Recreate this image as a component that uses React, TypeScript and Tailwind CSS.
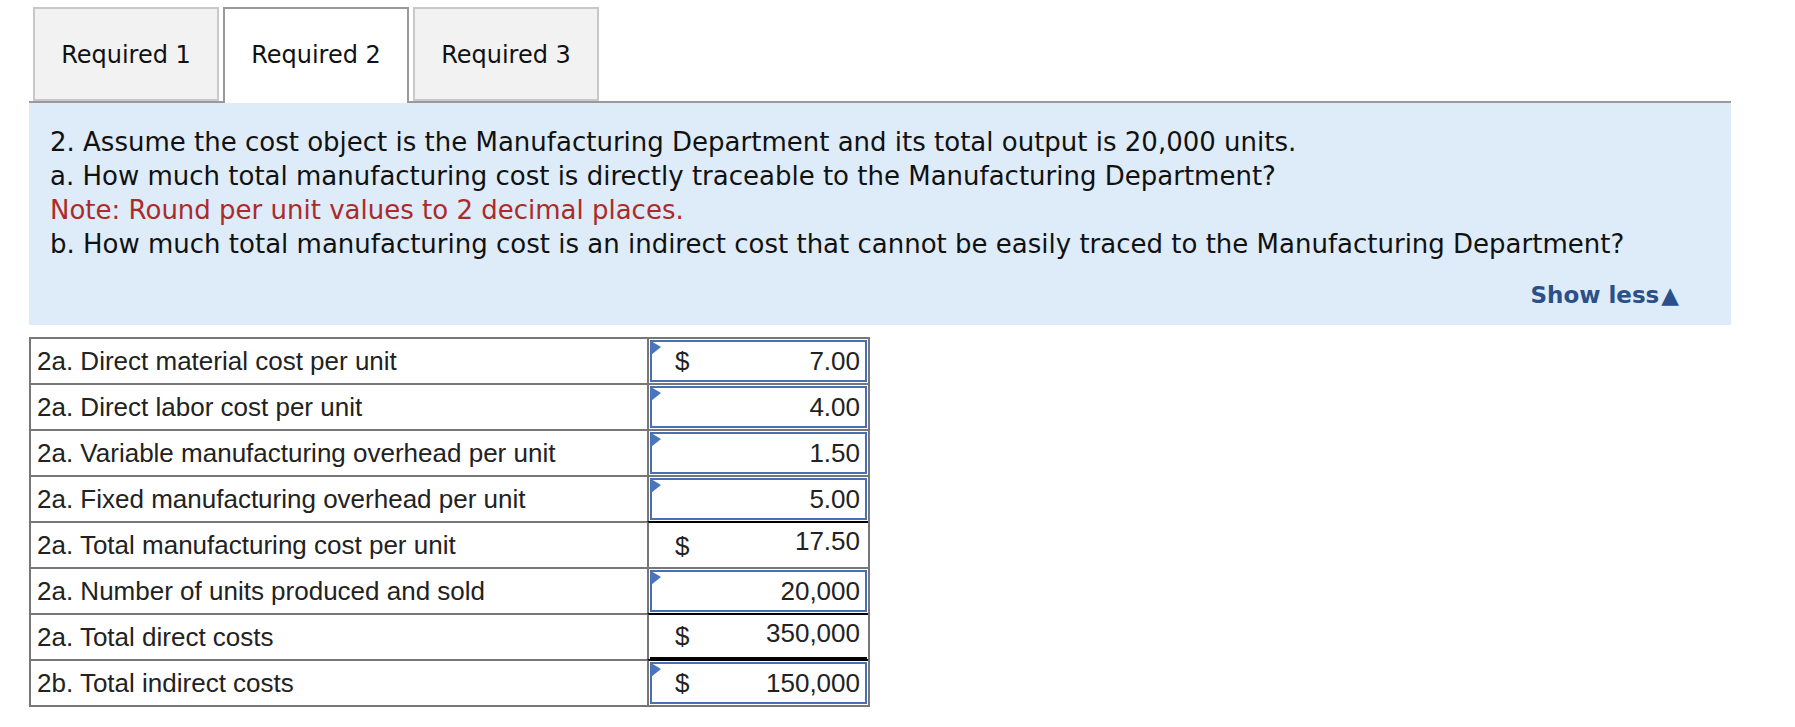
import React from "react";

type Row = {
  label: string;
  value: string;
  dollar?: boolean;
  input?: boolean;
  topBlack?: boolean;
  doubleLine?: boolean;
};

const rows: Row[] = [
  { label: "2a. Direct material cost per unit", value: "7.00", dollar: true, input: true },
  { label: "2a. Direct labor cost per unit", value: "4.00", input: true },
  { label: "2a. Variable manufacturing overhead per unit", value: "1.50", input: true },
  { label: "2a. Fixed manufacturing overhead per unit", value: "5.00", input: true },
  { label: "2a. Total manufacturing cost per unit", value: "17.50", dollar: true, topBlack: true },
  { label: "2a. Number of units produced and sold", value: "20,000", input: true },
  { label: "2a. Total direct costs", value: "350,000", dollar: true, topBlack: true, doubleLine: true },
  { label: "2b. Total indirect costs", value: "150,000", dollar: true, input: true, topBlack: true },
];

const tabs = ["Required 1", "Required 2", "Required 3"];

const ValueCell = ({ row }: { row: Row }) => {
  if (row.input) {
    return (
      <div className="h-full p-[1px]">
        <div className="relative h-full border-2 border-[#4a6fb3] flex items-center justify-between pl-[23px] pr-[5px]">
          <svg className="absolute left-[-1px] top-[-1px]" width="10" height="14" viewBox="0 0 10 14">
            <polygon points="0,0 10,6 0,14" fill="#4a74c0" />
          </svg>
          <span>{row.dollar ? "$" : ""}</span>
          <span>{row.value}</span>
        </div>
      </div>
    );
  }
  return (
    <div className="h-full pt-[1px] px-[1px]">
      <div className={`h-full flex justify-between pl-[25px] pr-[7px] ${row.doubleLine ? "border-b-2 border-black h-[40px]" : ""}`}>
        <span className="self-end pb-[1px]">{row.dollar ? "$" : ""}</span>
        <span className="self-start relative -top-[2px]">{row.value}</span>
      </div>
    </div>
  );
};

export default function App() {
  return (
    <div className="bg-white w-[1795px] h-[727px] pl-[29px] pt-[7px]" style={{ fontFamily: '"DejaVu Sans", Verdana, sans-serif' }}>
      <div className="w-[1702px]">
        {/* tabs */}
        <div className="flex items-start gap-[4px] pl-[4px] border-b-2 border-[#9a9a9a] h-[96px]">
          {tabs.map((t, i) => (
            <div
              key={t}
              className={`w-[186px] text-center pt-[32px] text-[24px] leading-[28px] text-[#111] ${
                i === 1
                  ? "h-[96px] bg-white border-2 border-b-0 border-[#9a9a9a] relative z-10"
                  : "h-[94px] bg-[#f2f2f2] border-2 border-[#c8c8c8]"
              }`}
            >
              {t}
            </div>
          ))}
        </div>

        {/* question panel */}
        <div className="bg-[#deebf8] pt-[22px] pb-[13px] pl-[21px] pr-[52px] text-[26px] leading-[34px] text-[#111]">
          <p>2. Assume the cost object is the Manufacturing Department and its total output is 20,000 units.</p>
          <p>a. How much total manufacturing cost is directly traceable to the Manufacturing Department?</p>
          <p className="text-[#ad2a2a]">Note: Round per unit values to 2 decimal places.</p>
          <p>b. How much total manufacturing cost is an indirect cost that cannot be easily traced to the Manufacturing Department?</p>
          <div className="flex justify-end mt-[17px]">
            <span className="font-bold text-[#2b4f88] text-[23px]">Show less<span className="ml-[2px]">▲</span></span>
          </div>
        </div>
      </div>

      {/* answer table */}
      <div
        className="mt-[12px] w-[841px] border-2 border-[#777] text-[26px] text-[#222]"
        style={{ fontFamily: '"Liberation Sans", Arial, sans-serif' }}
      >
        {rows.map((r, i) => (
          <div key={r.label} className="flex h-[46px] first:h-[44px]">
            <div className={`flex-1 flex items-center pl-[6px] ${i > 0 ? "border-t-2 border-[#777]" : ""}`}>{r.label}</div>
            <div
              className={`w-[221px] border-l-2 border-[#777] ${i > 0 ? "border-t-2" : ""} ${
                r.topBlack ? "border-t-black" : "border-t-[#777]"
              }`}
            >
              <ValueCell row={r} />
            </div>
          </div>
        ))}
      </div>
    </div>
  );
}
